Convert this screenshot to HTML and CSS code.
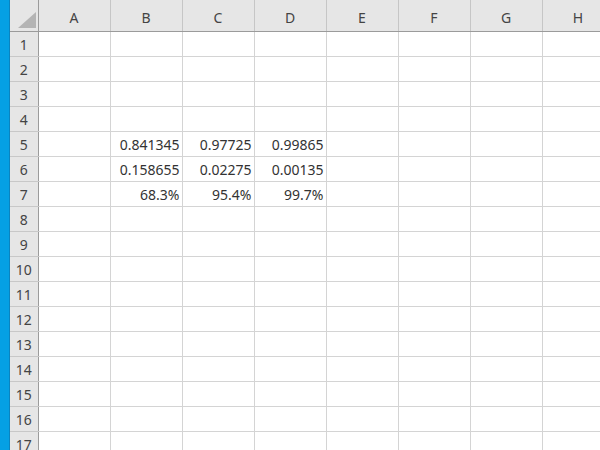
FILE: index.html
```html
<!DOCTYPE html>
<html>
<head>
<meta charset="utf-8">
<link rel="stylesheet" href="styles.css">
</head>
<body>
<div class="app">
  <div class="edge"></div>
  <table class="sheet">
    <colgroup>
      <col class="c-rh"><col class="c"><col class="c"><col class="c"><col class="c"><col class="c"><col class="c"><col class="c"><col class="c">
    </colgroup>
    <thead>
      <tr>
        <th class="corner"><span class="tri"></span></th>
        <th>A</th><th>B</th><th>C</th><th>D</th><th>E</th><th>F</th><th>G</th><th>H</th>
      </tr>
    </thead>
    <tbody>
      <tr><th>1</th><td></td><td></td><td></td><td></td><td></td><td></td><td></td><td></td></tr>
      <tr><th>2</th><td></td><td></td><td></td><td></td><td></td><td></td><td></td><td></td></tr>
      <tr><th>3</th><td></td><td></td><td></td><td></td><td></td><td></td><td></td><td></td></tr>
      <tr><th>4</th><td></td><td></td><td></td><td></td><td></td><td></td><td></td><td></td></tr>
      <tr><th>5</th><td></td><td>0.841345</td><td>0.97725</td><td>0.99865</td><td></td><td></td><td></td><td></td></tr>
      <tr><th>6</th><td></td><td>0.158655</td><td>0.02275</td><td>0.00135</td><td></td><td></td><td></td><td></td></tr>
      <tr><th>7</th><td></td><td>68.3%</td><td>95.4%</td><td>99.7%</td><td></td><td></td><td></td><td></td></tr>
      <tr><th>8</th><td></td><td></td><td></td><td></td><td></td><td></td><td></td><td></td></tr>
      <tr><th>9</th><td></td><td></td><td></td><td></td><td></td><td></td><td></td><td></td></tr>
      <tr><th>10</th><td></td><td></td><td></td><td></td><td></td><td></td><td></td><td></td></tr>
      <tr><th>11</th><td></td><td></td><td></td><td></td><td></td><td></td><td></td><td></td></tr>
      <tr><th>12</th><td></td><td></td><td></td><td></td><td></td><td></td><td></td><td></td></tr>
      <tr><th>13</th><td></td><td></td><td></td><td></td><td></td><td></td><td></td><td></td></tr>
      <tr><th>14</th><td></td><td></td><td></td><td></td><td></td><td></td><td></td><td></td></tr>
      <tr><th>15</th><td></td><td></td><td></td><td></td><td></td><td></td><td></td><td></td></tr>
      <tr><th>16</th><td></td><td></td><td></td><td></td><td></td><td></td><td></td><td></td></tr>
      <tr><th>17</th><td></td><td></td><td></td><td></td><td></td><td></td><td></td><td></td></tr>
    </tbody>
  </table>
</div>
</body>
</html>
```
FILE: styles.css
```css
html, body {
  margin: 0;
  padding: 0;
  background: #ffffff;
  overflow: hidden;
}
.app {
  display: flex;
  width: 600px;
  height: 450px;
  overflow: hidden;
}
.edge {
  flex: 0 0 9px;
  background: #05a0e4;
  border-right: 1px solid #0a84c0;
}
.sheet {
  border-collapse: collapse;
  table-layout: fixed;
  width: 604px;
  flex: 0 0 auto;
  font-family: "Noto Sans", "Noto Sans CJK JP", sans-serif;
  font-size: 14px;
  color: #333;
}
.c-rh { width: 28px; }
.c { width: 72px; }
.sheet th, .sheet td {
  padding: 1px 2px 0 0;
  height: 23px;
  border-right: 1px solid #d4d4d4;
  border-bottom: 1px solid #d4d4d4;
  white-space: nowrap;
  overflow: hidden;
  text-align: right;
  font-weight: normal;
  line-height: 23px;
}
.sheet thead th {
  height: 27px;
  line-height: 27px;
  background: #e6e6e6;
  text-align: center;
  padding: 4px 0 0 0;
  border-right: 1px solid #c6c6c6;
  border-bottom: 1px solid #9b9b9b;
  color: #444;
}
.sheet tbody th {
  background: #e6e6e6;
  text-align: center;
  padding: 1px 0 0 0;
  border-right: 1px solid #9b9b9b;
  border-bottom: 1px solid #c8c8c8;
  color: #444;
}
.sheet thead th.corner {
  position: relative;
  border-right: 1px solid #9b9b9b;
}
.tri {
  position: absolute;
  right: 2px;
  bottom: 3px;
  width: 0;
  height: 0;
  border-left: 18px solid transparent;
  border-bottom: 16px solid #b4b4b4;
}
```
